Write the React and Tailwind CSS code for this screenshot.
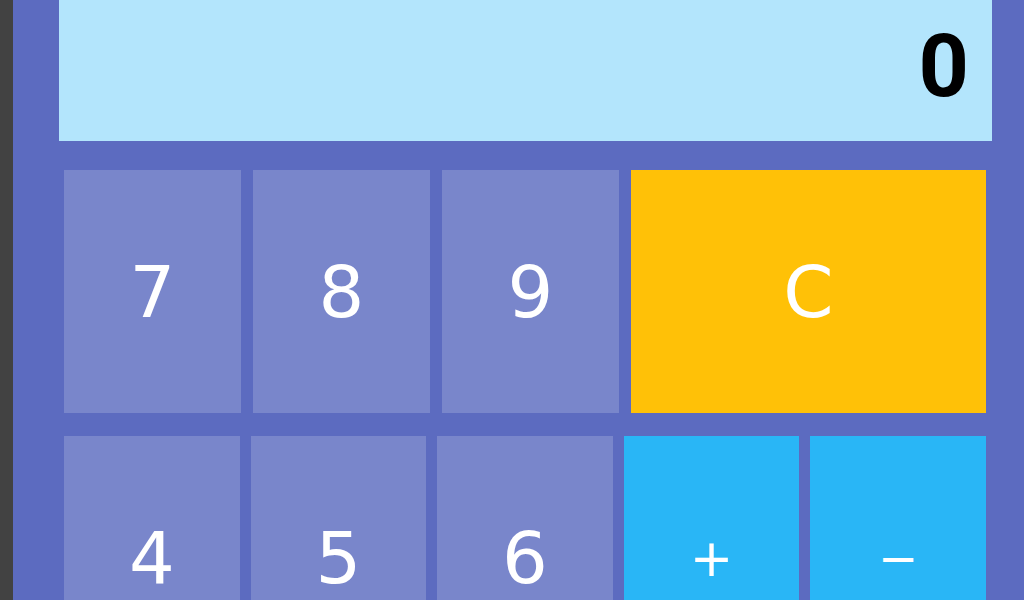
import React from "react";

function Key({ label, color, size }) {
    return (
        <button className={"flex items-center justify-center text-white leading-none " + color + " " + size}>
            {label}
        </button>
    );
}

function App() {
    return (
        <div className="flex h-screen overflow-hidden bg-[#424242] pl-[13px] font-['DejaVu_Sans',sans-serif]">
            <div className="flex-1 bg-[#5c6bc0] pl-[46px] pr-[32px]">
                <div className="flex h-[141px] items-center justify-end bg-[#b3e5fc] pr-[23px] pb-[9px] font-['Roboto',sans-serif] text-[88px] font-bold leading-none text-black">
                    0
                </div>

                <div className="mt-[29px] ml-[5px] mr-[6px] grid h-[243px] grid-cols-[177px_177px_177px_1fr] gap-x-3">
                    <Key label="7" color="bg-[#7986cb]" size="text-[72px]" />
                    <Key label="8" color="bg-[#7986cb]" size="text-[72px]" />
                    <Key label="9" color="bg-[#7986cb]" size="text-[72px]" />
                    <Key label="C" color="bg-[#ffc107]" size="text-[72px]" />
                </div>

                <div className="mt-[23px] ml-[5px] mr-[6px] grid h-[243px] grid-cols-5 gap-x-[11px]">
                    <Key label="4" color="bg-[#7986cb]" size="text-[72px]" />
                    <Key label="5" color="bg-[#7986cb]" size="text-[72px]" />
                    <Key label="6" color="bg-[#7986cb]" size="text-[72px]" />
                    <Key label="+" color="bg-[#29b6f6]" size="text-[52px]" />
                    <Key label="−" color="bg-[#29b6f6]" size="text-[48px]" />
                </div>
            </div>
        </div>
    );
}

export default App;
